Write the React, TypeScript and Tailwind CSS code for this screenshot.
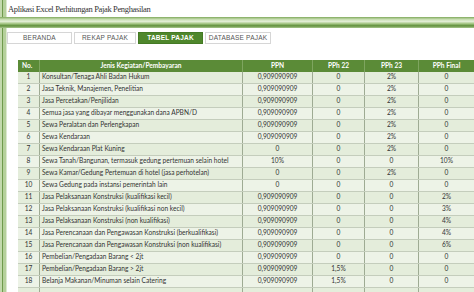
import React from 'react';

type Row = [string, string, string, string, string, string];

const rows: Row[] = [
  ['1', 'Konsultan/Tenaga Ahli Badan Hukum', '0,909090909', '0', '2%', '0'],
  ['2', 'Jasa Teknik, Manajemen, Penelitian', '0,909090909', '0', '2%', '0'],
  ['3', 'Jasa Percetakan/Penjilidan', '0,909090909', '0', '2%', '0'],
  ['4', 'Semua jasa yang dibayar menggunakan dana APBN/D', '0,909090909', '0', '2%', '0'],
  ['5', 'Sewa Peralatan dan Perlengkapan', '0,909090909', '0', '2%', '0'],
  ['6', 'Sewa Kendaraan', '0,909090909', '0', '2%', '0'],
  ['7', 'Sewa Kendaraan Plat Kuning', '0', '0', '2%', '0'],
  ['8', 'Sewa Tanah/Bangunan, termasuk gedung pertemuan selain hotel', '10%', '0', '0', '10%'],
  ['9', 'Sewa Kamar/Gedung Pertemuan di hotel (jasa perhotelan)', '0', '0', '2%', '0'],
  ['10', 'Sewa Gedung pada instansi pemerintah lain', '0', '0', '0', '0'],
  ['11', 'Jasa Pelaksanaan Konstruksi (kualifikasi kecil)', '0,909090909', '0', '0', '2%'],
  ['12', 'Jasa Pelaksanaan Konstruksi (kualifikasi non kecil)', '0,909090909', '0', '0', '3%'],
  ['13', 'Jasa Pelaksanaan Konstruksi (non kualifikasi)', '0,909090909', '0', '0', '4%'],
  ['14', 'Jasa Perencanaan dan Pengawasan Konstruksi (berkualifikasi)', '0,909090909', '0', '0', '4%'],
  ['15', 'Jasa Perencanaan dan Pengawasan Konstruksi (non kualifikasi)', '0,909090909', '0', '0', '6%'],
  ['16', 'Pembelian/Pengadaan Barang < 2jt', '0,909090909', '0', '0', '0'],
  ['17', 'Pembelian/Pengadaan Barang > 2jt', '0,909090909', '1,5%', '0', '0'],
  ['18', 'Belanja Makanan/Minuman selain Catering', '0,909090909', '1,5%', '0', '0'],
  ['', '', '', '', '', ''],
];

const tabs = ['BERANDA', 'REKAP PAJAK', 'TABEL PAJAK', 'DATABASE PAJAK'];

const cols = 'grid grid-cols-[22px_203px_70px_52px_54px_55px]';

function Strip() {
  return (
    <div className="w-[7px] shrink-0 flex">
      <div className="w-[2px] bg-[#c3d9ad]" />
      <div className="w-[1px] bg-[#6f9a4c]" />
      <div className="w-[3px] bg-[#b5d09b]" />
      <div className="w-[1px] bg-[#dbe8cf]" />
    </div>
  );
}

export default function App() {
  return (
    <div className="w-[474px] h-[292px] overflow-hidden bg-white flex flex-col">
      <div className="h-[17px] flex shrink-0">
        <Strip />
        <div className="pl-[1px] pt-[3px] text-[8.5px] leading-[12px] tracking-[-0.35px] text-[#333] font-['Liberation_Serif',serif]">
          Aplikasi Excel Perhitungan Pajak Penghasilan
        </div>
      </div>

      <div className="h-[11px] shrink-0 bg-[linear-gradient(to_bottom,#7fa95b_0%,#c4dbad_20%,#e4efd8_40%,#a6c786_60%,#5f8f3b_80%,#a9c78d_100%)]" />

      <div className="flex flex-1 min-h-0">
        <Strip />
        <div className="flex-1 flex flex-col min-w-0">
          <div className="mt-[4px] flex gap-[2px] h-[12px] font-['Liberation_Sans',sans-serif] text-[6.5px] tracking-[0.2px]">
            {tabs.map((t) => (
              <div
                key={t}
                className={`flex items-center justify-center ${
                  t === 'TABEL PAJAK'
                    ? 'w-[65px] bg-[#4f872c] text-white font-bold border border-[#447a24]'
                    : t === 'BERANDA'
                    ? 'w-[65px] bg-white text-[#555] border border-[#d6d6d6]'
                    : t === 'REKAP PAJAK'
                    ? 'w-[62px] bg-white text-[#555] border border-[#d6d6d6]'
                    : 'w-[66px] bg-white text-[#555] border border-[#d6d6d6]'
                }`}
              >
                {t}
              </div>
            ))}
          </div>
          <div className="mt-[2px] h-[3px] w-[262px] bg-[#bcd2a8]" />

          <div className="mt-[14px] ml-[11px] font-['Lato',sans-serif] text-[6.6px] text-[#333]">
            <div className={`${cols} h-[12px] bg-[#5b8b37] text-white font-bold`}>
              <div className="flex items-center pl-[4px] border-r border-[#7ea55f]">No.</div>
              <div className="flex items-center justify-center border-r border-[#7ea55f]">Jenis Kegiatan/Pembayaran</div>
              <div className="flex items-center justify-center border-r border-[#7ea55f]">PPN</div>
              <div className="flex items-center justify-center border-r border-[#7ea55f]">PPh 22</div>
              <div className="flex items-center justify-center border-r border-[#7ea55f]">PPh 23</div>
              <div className="flex items-center justify-center">PPh Final</div>
            </div>
            {rows.map((r, i) => (
              <div
                key={i}
                className={`${cols} h-[12px] border-b border-[#c4cdbc] ${i % 2 === 0 ? 'bg-[#e4eddb]' : 'bg-[#edf3e7]'}`}
              >
                <div className="flex items-center justify-center border-r border-[#9eab93]">{r[0]}</div>
                <div className="flex items-center pl-[2px] border-r border-[#9eab93] whitespace-nowrap overflow-hidden">{r[1]}</div>
                <div className="flex items-center justify-center border-r border-[#9eab93]">{r[2]}</div>
                <div className="flex items-center justify-center border-r border-[#9eab93]">{r[3]}</div>
                <div className="flex items-center justify-center border-r border-[#9eab93]">{r[4]}</div>
                <div className="flex items-center justify-center">{r[5]}</div>
              </div>
            ))}
          </div>
        </div>
      </div>
    </div>
  );
}
